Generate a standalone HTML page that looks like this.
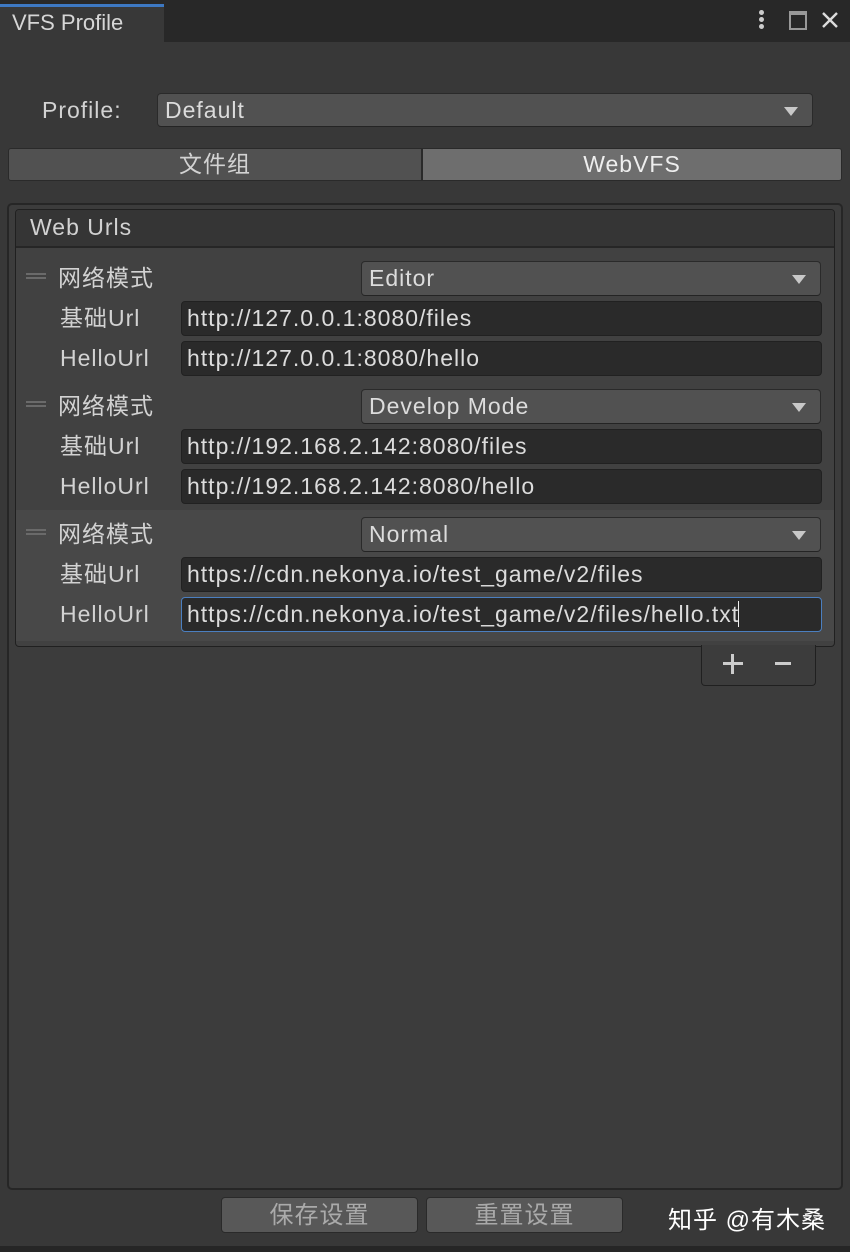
<!DOCTYPE html>
<html><head><meta charset="utf-8"><style>
*{margin:0;padding:0;box-sizing:border-box}
body{width:850px;height:1252px;background:#383838;font-family:"Liberation Sans","Noto Sans CJK SC",sans-serif;color:#d2d2d2;font-size:23px;letter-spacing:1px;position:relative;overflow:hidden}
.a{position:absolute}
.dd{position:absolute;background:#515151;border:1px solid #2a2a2a;border-bottom-color:#242424;border-radius:4px;padding-left:7px;line-height:32px;color:#dcdcdc}
.dd:after{content:"";position:absolute;right:14px;top:13px;border-left:7px solid transparent;border-right:7px solid transparent;border-top:9px solid #c8c8c8}
.f{position:absolute;left:181px;width:641px;height:35px;background:#2a2a2a;border:1px solid #212121;border-radius:4px;padding-left:5px;line-height:33px;color:#dcdcdc;white-space:nowrap}
.lb{position:absolute;line-height:34px}
.h{position:absolute;left:26px;width:20px;height:6px;border-top:2px solid #6a6a6a;border-bottom:2px solid #6a6a6a}
.btn{position:absolute;top:1197px;height:36px;background:#585858;border:1px solid #2a2a2a;border-radius:4px;text-align:center;line-height:36px;color:#aaa;font-size:24px}
</style></head><body>
<div class="a" style="left:0;top:0;width:850px;height:42px;background:#282828"></div>
<div class="a" style="left:0;top:4px;width:164px;height:38px;background:#383838;border-top:3px solid #3d78c2"></div>
<div class="a" style="left:12px;top:10px;font-size:22px;letter-spacing:0;color:#d6d6d6">VFS Profile</div>
<div class="a" style="left:759px;top:10px;width:5px;height:5px;border-radius:50%;background:#ccc;box-shadow:0 7px 0 #ccc,0 14px 0 #ccc"></div>
<div class="a" style="left:789px;top:11px;width:18px;height:19px;border:2px solid #999;border-top-width:4px"></div>
<svg class="a" style="left:820px;top:10px" width="20" height="20"><path d="M3 3L17 17M17 3L3 17" stroke="#ddd" stroke-width="2.4"/></svg>

<div class="lb" style="left:42px;top:93px">Profile:</div>
<div class="dd" style="left:157px;top:93px;width:656px;height:34px">Default</div>

<div class="a" style="left:8px;top:148px;width:414px;height:33px;background:#515151;border:1px solid #2a2a2a;border-radius:3px 0 0 3px;text-align:center;line-height:31px">文件组</div>
<div class="a" style="left:422px;top:148px;width:420px;height:33px;background:#6e6e6e;border:1px solid #2a2a2a;border-radius:0 3px 3px 0;text-align:center;line-height:31px;color:#eee">WebVFS</div>

<div class="a" style="left:7px;top:203px;width:836px;height:987px;background:#3c3c3c;border:2px solid #262626;border-radius:5px"></div>
<div class="a" style="left:15px;top:209px;width:820px;height:438px;background:#414141;border:1px solid #202020;border-radius:4px;overflow:hidden">
 <div class="a" style="left:0;top:0;width:820px;height:38px;background:#353535;border-bottom:2px solid #262626"></div>
 <div class="a" style="left:0;top:300px;width:820px;height:131px;background:#484848"></div>
</div>
<div class="a" style="left:30px;top:214px">Web Urls</div>

<div class="h" style="top:273px"></div>
<div class="lb" style="left:58px;top:261px">网络模式</div>
<div class="dd" style="left:361px;top:261px;width:460px;height:35px">Editor</div>
<div class="lb" style="left:60px;top:301px">基础Url</div>
<div class="f" style="top:301px">http://127.0.0.1:8080/files</div>
<div class="lb" style="left:60px;top:341px">HelloUrl</div>
<div class="f" style="top:341px">http://127.0.0.1:8080/hello</div>

<div class="h" style="top:401px"></div>
<div class="lb" style="left:58px;top:389px">网络模式</div>
<div class="dd" style="left:361px;top:389px;width:460px;height:35px">Develop Mode</div>
<div class="lb" style="left:60px;top:429px">基础Url</div>
<div class="f" style="top:429px">http://192.168.2.142:8080/files</div>
<div class="lb" style="left:60px;top:469px">HelloUrl</div>
<div class="f" style="top:469px">http://192.168.2.142:8080/hello</div>

<div class="h" style="top:529px"></div>
<div class="lb" style="left:58px;top:517px">网络模式</div>
<div class="dd" style="left:361px;top:517px;width:460px;height:35px">Normal</div>
<div class="lb" style="left:60px;top:557px">基础Url</div>
<div class="f" style="top:557px">https://cdn.nekonya.io/test_game/v2/files</div>
<div class="lb" style="left:60px;top:597px">HelloUrl</div>
<div class="f" style="top:597px;border:1px solid #4b7fc0">https://cdn.nekonya.io/test_game/v2/files/hello.txt<span style="border-left:1px solid #eee;margin-left:-1px"></span></div>

<div class="a" style="left:701px;top:645px;width:115px;height:41px;background:#3c3c3c;border:1px solid #202020;border-top:none;border-radius:0 0 4px 4px"></div>
<div class="a" style="left:723px;top:662px;width:20px;height:3px;background:#ccc"></div>
<div class="a" style="left:731px;top:654px;width:3px;height:20px;background:#ccc"></div>
<div class="a" style="left:775px;top:662px;width:16px;height:3px;background:#ccc"></div>

<div class="btn" style="left:221px;width:197px">保存设置</div>
<div class="btn" style="left:426px;width:197px">重置设置</div>
<div class="a" style="left:668px;top:1200px;color:#fff;font-size:24px;letter-spacing:1px">知乎 @有木桑</div>
<div class="a" style="left:0;top:1246px;width:850px;height:6px;background:#262626"></div>
</body></html>
